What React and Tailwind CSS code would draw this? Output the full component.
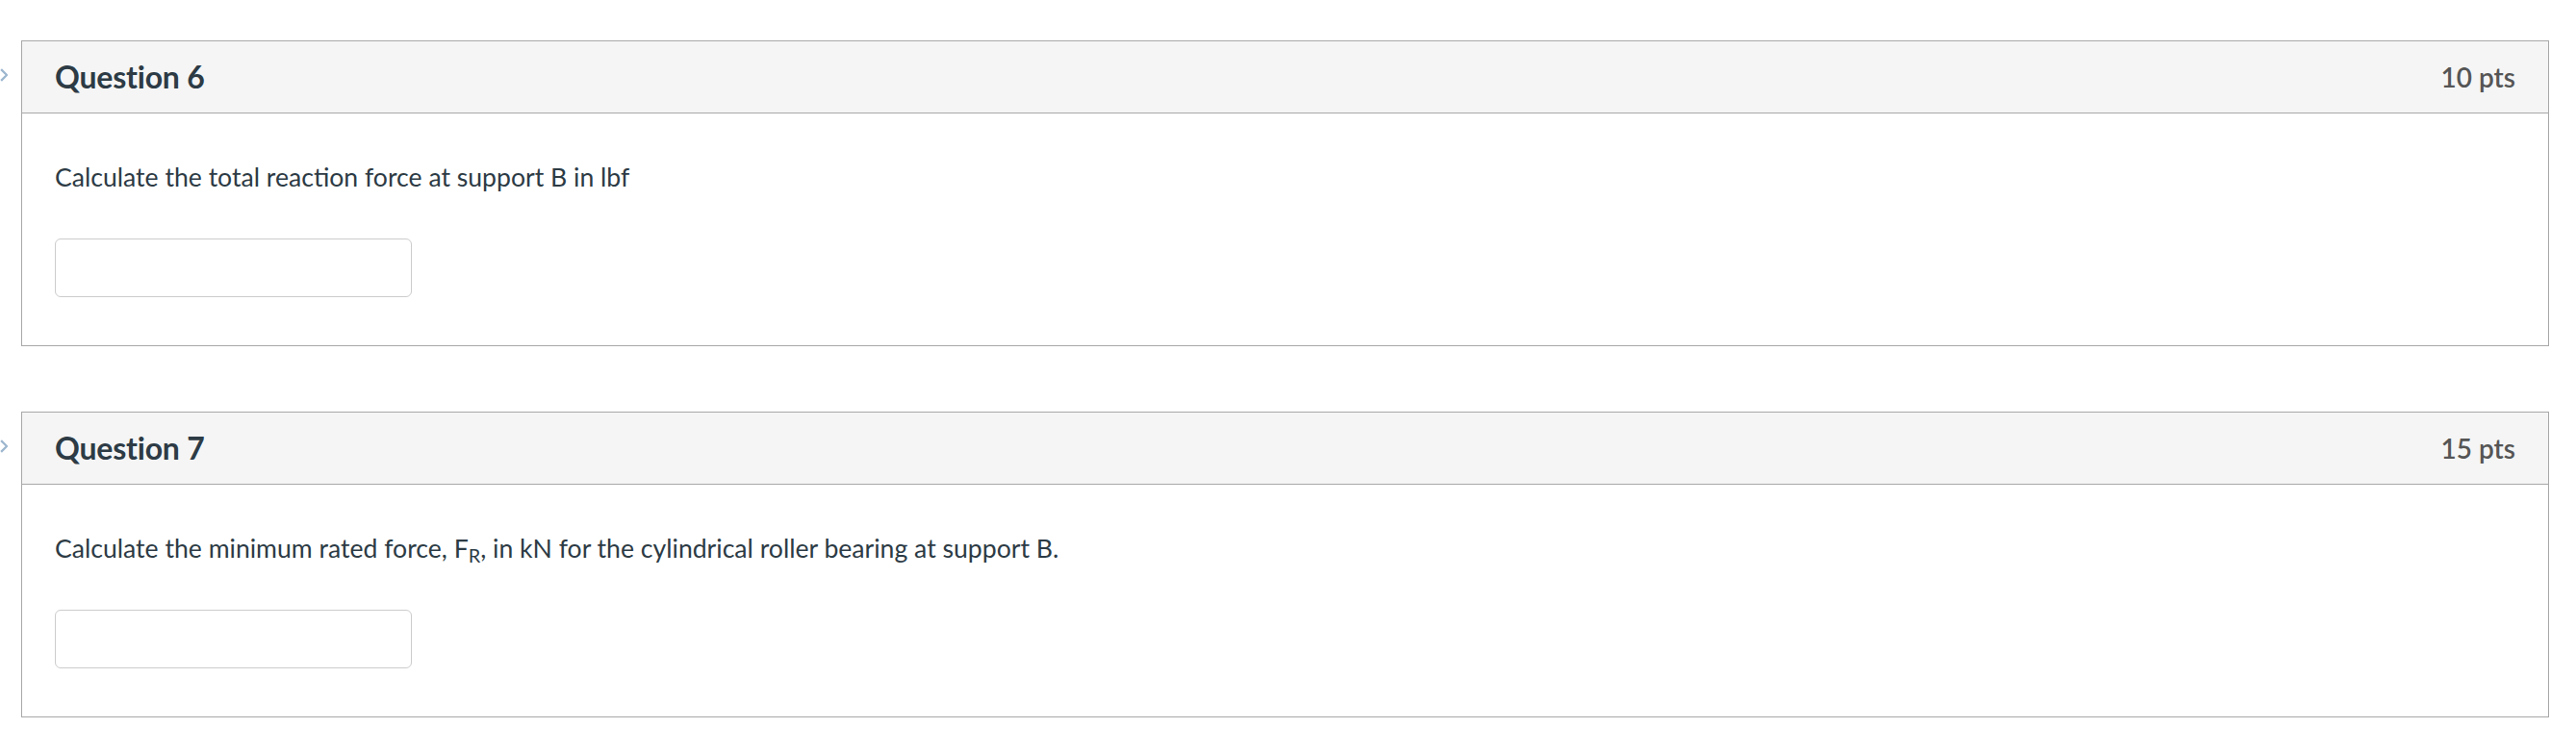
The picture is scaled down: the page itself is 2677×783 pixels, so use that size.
import React from 'react';

const questions = [
    { id: 6, points: 10, text: <>Calculate the total reaction force at support B in lbf</> },
    {
        id: 7,
        points: 15,
        text: (
            <>
                Calculate the minimum rated force, F<sub className="text-[0.75em]">R</sub>, in kN for the cylindrical roller bearing at support B.
            </>
        )
    }
];

// the expand arrow sits mostly off the left edge of the page
const Chevron = () => (
    <svg className="absolute left-0 top-[24px]" width="9" height="24" viewBox="-7 0 16 24" fill="none">
        <path d="M-5 1.5 L5.5 12 L-5 22.5" stroke="#9db7cf" strokeWidth="4" strokeLinejoin="round" />
    </svg>
);

const Question = ({ q }) => (
    <div className="relative">
        <div className="border border-[#a8a8a8] bg-white">
            <div className="h-[75px] bg-[#f5f5f5] border-b border-[#a8a8a8] flex items-center justify-between px-[34px]">
                <h2 className="text-[32px] font-bold text-[#2d3b45] tracking-[-0.2px]">Question {q.id}</h2>
                <div className="text-[28px] font-semibold text-[#555555]">{q.points} pts</div>
            </div>
            <div className="px-[34px] pt-[46px] pb-[50px]">
                <p className="text-[26.6px] leading-[40px] text-[#2d3b45]">{q.text}</p>
                <input
                    type="text"
                    className="mt-[44px] block w-[371px] h-[61px] rounded-[6px] border border-[#cccccc] bg-white"
                />
            </div>
        </div>
        <div className="absolute left-[-22px] top-0 h-[76px] w-[22px]">
            <Chevron />
        </div>
    </div>
);

export default function App() {
    return (
        <div className="min-h-screen bg-white pt-[42px] pl-[22px] pr-[28px] font-['Lato','Liberation_Sans',sans-serif]">
            <div className="flex flex-col gap-[68px]">
                {questions.map((q) => (
                    <Question key={q.id} q={q} />
                ))}
            </div>
        </div>
    );
}
